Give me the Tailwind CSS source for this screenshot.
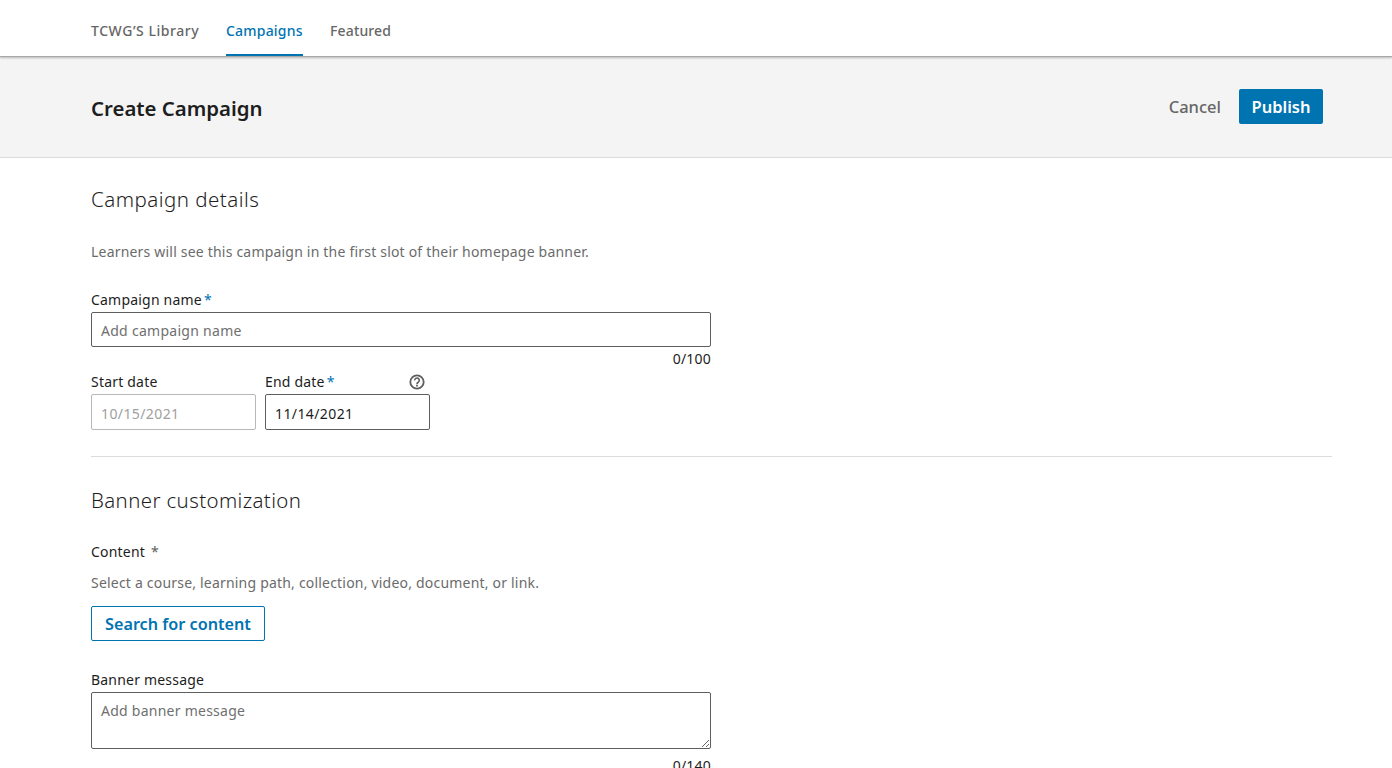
<!DOCTYPE html>
<html lang="en">
<head>
<meta charset="utf-8">
<title>Create Campaign</title>
<script src="https://cdn.jsdelivr.net/npm/@tailwindcss/browser@4"></script>
</head>
<body class="h-[768px] overflow-hidden bg-white font-['Noto_Sans',sans-serif] text-[#1d1d1d]">

<!-- Top nav -->
<nav class="relative z-10 flex h-[57px] border-b border-[#a8a8a8] bg-white pl-[91px] text-[14px] font-medium text-[#666] shadow-[0_1px_2px_rgba(0,0,0,0.25)]">
    <a class="w-[108px] pt-[21px] leading-[20px] tracking-[0.55px] whitespace-nowrap">TCWG’S Library</a>
    <a class="ml-[27px] h-[56px] w-[77px] border-b-2 border-[#0073b1] pt-[21px] leading-[20px] tracking-[0.2px] whitespace-nowrap text-[#0073b1]">Campaigns</a>
    <a class="ml-[27px] pt-[21px] leading-[20px] tracking-[0.15px]">Featured</a>
</nav>

<!-- Page header -->
<header class="flex h-[101px] items-start justify-between border-b border-[#dcdcdc] bg-[#f4f4f4] pl-[91px] pr-[69px]">
    <h1 class="mt-[36px] text-[20.4px] font-semibold leading-[30px]">Create Campaign</h1>
    <div class="mt-[32px] flex items-center gap-[18px]">
        <button class="h-[35px] pt-[1px] text-[16.5px] font-medium text-[#666]">Cancel</button>
        <button class="h-[35px] w-[84px] rounded-[2px] bg-[#0073b1] pt-[1px] text-[16.5px] font-semibold text-white">Publish</button>
    </div>
</header>

<main class="pl-[91px] pr-[60px] text-[14px] tracking-[0.2px]">
    <!-- Campaign details -->
    <section class="border-b border-[#dcdcdc] pb-[26px]">
        <h2 class="pt-[27px] text-[20.5px] font-[350] leading-[28px] tracking-[0.48px]">Campaign details</h2>
        <p class="mt-[29px] leading-[20px] text-[#6b6b6b]">Learners will see this campaign in the first slot of their homepage banner.</p>

        <div class="mt-[28px] w-[620px]">
            <label class="block leading-[20px]">Campaign name<span class="ml-[2px] text-[#0073b1]">*</span></label>
            <input type="text" placeholder="Add campaign name" class="mt-[2px] block h-[35px] w-full rounded-[2px] border border-[#5e5e5e] px-[9px] pt-[2px] tracking-[0.28px] placeholder:text-[#6f6f6f]">
            <div class="mt-[2px] text-right leading-[20px]">0/100</div>
        </div>

        <div class="mt-[3px] flex gap-[9px]">
            <div class="w-[165px]">
                <label class="block leading-[20px]">Start date</label>
                <input type="text" disabled value="10/15/2021" class="mt-[2px] block h-[36px] w-full rounded-[2px] border border-[#b8b8b8] bg-white px-[9px] pt-[2px] tracking-[0.4px] text-[#a0a0a0]">
            </div>
            <div class="w-[165px]">
                <div class="flex items-center justify-between pr-[5px]">
                    <label class="leading-[20px]">End date<span class="ml-[2px] text-[#0073b1]">*</span></label>
                    <svg class="h-4 w-4" viewBox="0 0 16 16" fill="none">
                        <circle cx="8" cy="8" r="6.7" stroke="#5e5e5e" stroke-width="1.8"/>
                        <path d="M5.7 6.4a2.3 2.3 0 1 1 3.6 1.8c-.9.5-1.3.9-1.3 1.7" stroke="#5e5e5e" stroke-width="1.6"/>
                        <rect x="7.1" y="10.7" width="1.8" height="1.8" fill="#5e5e5e"/>
                    </svg>
                </div>
                <input type="text" value="11/14/2021" class="mt-[2px] block h-[36px] w-full rounded-[2px] border border-[#5e5e5e] px-[9px] pt-[2px] tracking-[0.4px]">
            </div>
        </div>
    </section>

    <!-- Banner customization -->
    <section>
        <h2 class="pt-[29px] text-[20.4px] font-[350] leading-[28px] tracking-[0.4px]">Banner customization</h2>
        <div class="mt-[28px] leading-[20px]">Content <span class="ml-[2px] text-[#5e5e5e]">*</span></div>
        <p class="mt-[11px] leading-[20px] text-[#6b6b6b]">Select a course, learning path, collection, video, document, or link.</p>
        <button class="mt-[13px] h-[35px] w-[174px] rounded-[2px] border border-[#0073b1] pt-[2px] text-[16.2px] font-semibold tracking-normal text-[#0073b1]">Search for content</button>

        <div class="mt-[29px] w-[620px]">
            <label class="block leading-[20px]">Banner message</label>
            <textarea placeholder="Add banner message" class="mt-[2px] block h-[57px] w-full resize-y rounded-[2px] border border-[#5e5e5e] px-[9px] py-[8px] leading-[20px] tracking-[0.25px] placeholder:text-[#6f6f6f]"></textarea>
            <div class="mt-[7px] text-right leading-[20px]">0/140</div>
        </div>
    </section>
</main>
</body>
</html>
